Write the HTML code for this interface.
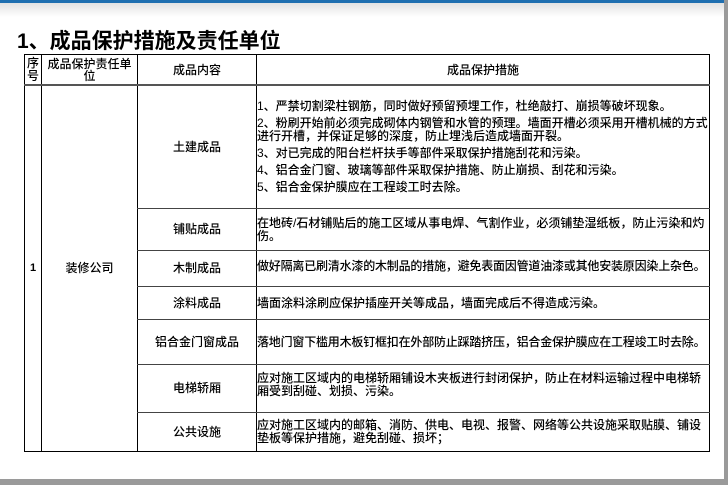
<!DOCTYPE html>
<html><head><meta charset="utf-8"><style>
body{margin:0;width:728px;height:485px;overflow:hidden;background:#9a9a9a;font-family:"Liberation Sans","Noto Sans CJK SC",sans-serif;position:relative}
.pg{position:absolute;left:0;top:0;width:724px;height:479px;background:#fff}
.top{position:absolute;left:0;top:0;width:724px;height:3px;background:#1f6fb0}
.sh{position:absolute;left:0;top:3px;width:724px;height:14px;background:linear-gradient(#e2e2e2,#fff)}
.t{position:absolute;left:17px;top:30px;font-size:21px;font-weight:bold;line-height:24px;color:#000}
.l{position:absolute;background:#000}
.c{position:absolute;font-size:12px;line-height:13px;color:#000;display:flex;align-items:center;justify-content:center;text-align:center;font-weight:500}
.m{position:absolute;left:257px;width:453px;font-size:12px;line-height:13px;color:#000;display:flex;align-items:center;font-weight:500}
.m p{margin:0 0 4px 0;line-height:13px}
.nw{white-space:nowrap;letter-spacing:-0.2px}
</style></head><body>
<div class="pg"></div><div class="top"></div><div class="sh"></div>
<div class="t">1、成品保护措施及责任单位</div>
<div class="l" style="left:24px;top:54px;width:1px;height:398px"></div>
<div class="l" style="left:41px;top:54px;width:1px;height:398px"></div>
<div class="l" style="left:137px;top:54px;width:1px;height:398px"></div>
<div class="l" style="left:256px;top:54px;width:1px;height:398px"></div>
<div class="l" style="left:709px;top:54px;width:1px;height:398px"></div>
<div class="l" style="left:24px;top:54px;width:686px;height:1px"></div>
<div class="l" style="left:24px;top:84px;width:686px;height:2px;background:#555"></div>
<div class="l" style="left:137px;top:208px;width:573px;height:1px;background:#444"></div>
<div class="l" style="left:137px;top:250px;width:573px;height:1px;background:#444"></div>
<div class="l" style="left:137px;top:286px;width:573px;height:1px;background:#444"></div>
<div class="l" style="left:137px;top:319px;width:573px;height:1px;background:#444"></div>
<div class="l" style="left:137px;top:364px;width:573px;height:1px;background:#444"></div>
<div class="l" style="left:137px;top:412px;width:573px;height:1px;background:#444"></div>
<div class="l" style="left:24px;top:451px;width:686px;height:1px"></div>
<div class="c" style="left:25px;top:55px;width:16px;height:30px;line-height:13px">序<br>号</div>
<div class="c" style="left:42px;top:55px;width:95px;height:30px;line-height:12px">成品保护责任单<br>位</div>
<div class="c" style="left:138px;top:55px;width:118px;height:30px">成品内容</div>
<div class="c" style="left:257px;top:55px;width:452px;height:30px">成品保护措施</div>
<div class="c" style="left:25px;top:86px;width:16px;height:365px;font-weight:bold;font-size:11px">1</div>
<div class="c" style="left:42px;top:86px;width:95px;height:365px">装修公司</div>
<div class="c" style="left:138px;top:86px;width:118px;height:122px">土建成品</div>
<div class="c" style="left:138px;top:209px;width:118px;height:41px">铺贴成品</div>
<div class="c" style="left:138px;top:251px;width:118px;height:35px">木制成品</div>
<div class="c" style="left:138px;top:287px;width:118px;height:32px">涂料成品</div>
<div class="c" style="left:138px;top:320px;width:118px;height:44px">铝合金门窗成品</div>
<div class="c" style="left:138px;top:365px;width:118px;height:47px">电梯轿厢</div>
<div class="c" style="left:138px;top:413px;width:118px;height:38px">公共设施</div>
<div class="m" style="top:86px;height:122px"><div><p>1、严禁切割梁柱钢筋，同时做好预留预埋工作，杜绝敲打、崩损等破坏现象。</p><p>2、粉刷开始前必须完成砌体内钢管和水管的预理。墙面开槽必须采用开槽机械的方式进行开槽，并保证足够的深度，防止埋浅后造成墙面开裂。</p><p>3、对已完成的阳台栏杆扶手等部件采取保护措施刮花和污染。</p><p>4、铝合金门窗、玻璃等部件采取保护措施、防止崩损、刮花和污染。</p><p style="margin:0">5、铝合金保护膜应在工程竣工时去除。</p></div></div>
<div class="m" style="top:209px;height:41px"><div>在地砖/石材铺贴后的施工区域从事电焊、气割作业，必须铺垫湿纸板，防止污染和灼伤。</div></div>
<div class="m" style="top:251px;height:30px"><div class="nw">做好隔离已刷清水漆的木制品的措施，避免表面因管道油漆或其他安装原因染上杂色。</div></div>
<div class="m" style="top:287px;height:32px"><div>墙面涂料涂刷应保护插座开关等成品，墙面完成后不得造成污染。</div></div>
<div class="m" style="top:320px;height:44px"><div class="nw">落地门窗下槛用木板钉框扣在外部防止踩踏挤压，铝合金保护膜应在工程竣工时去除。</div></div>
<div class="m" style="top:365px;height:40px"><div>应对施工区域内的电梯轿厢铺设木夹板进行封闭保护，防止在材料运输过程中电梯轿厢受到刮碰、划损、污染。</div></div>
<div class="m" style="top:413px;height:38px"><div>应对施工区域内的邮箱、消防、供电、电视、报警、网络等公共设施采取贴膜、铺设垫板等保护措施，避免刮碰、损坏；</div></div>
</body></html>
